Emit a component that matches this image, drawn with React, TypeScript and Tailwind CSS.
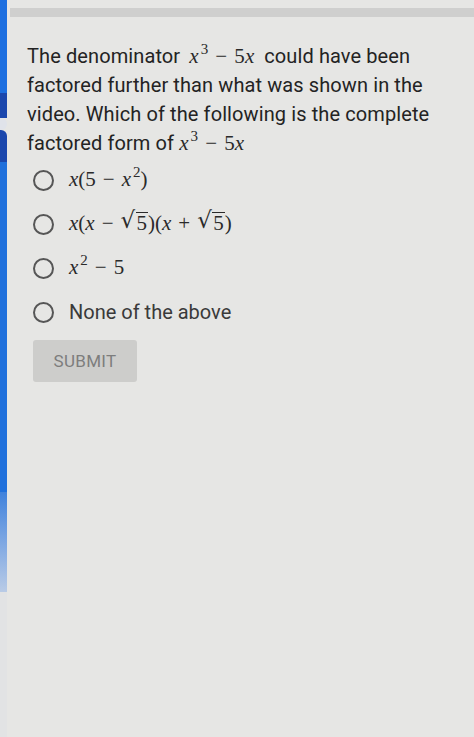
import React from "react";

const M: React.FC<{ children: React.ReactNode }> = ({ children }) => (
  <span className="font-['Liberation_Serif',serif] text-[21px] text-[#2a2a2a]">{children}</span>
);
const I: React.FC<{ children: React.ReactNode }> = ({ children }) => <i>{children}</i>;
const Sup: React.FC<{ children: React.ReactNode }> = ({ children }) => (
  <sup className="text-[15px] top-[-0.6em] ml-[2px]">{children}</sup>
);
const Sqrt: React.FC<{ children: React.ReactNode }> = ({ children }) => (
  <span className="inline-block relative pl-[15px]">
    <span className="absolute left-0 top-[-2px] font-['DejaVu_Serif',serif] text-[23px] leading-[28px]">√</span>
    <span className="inline-block border-t-[1.5px] border-[#2a2a2a] leading-[21px] pl-[1px] pr-[1px]">{children}</span>
  </span>
);

const Radio: React.FC = () => (
  <span className="w-[21px] h-[21px] rounded-full border-[2px] border-[#565656] shrink-0" />
);

export default function App() {
  return (
    <div className="w-[474px] h-[737px] flex bg-[#e6e6e4] overflow-hidden font-['Roboto',sans-serif]">
      <div className="w-[7px] flex flex-col shrink-0">
        <div className="h-[93px] bg-[#1d6fe0]" />
        <div className="h-[25px] bg-[#1b47ad]" />
        <div className="h-[12px] bg-[#e0e3ea] rounded-r-[8px]" />
        <div className="h-[32px] bg-[#1b47ad] rounded-tr-[6px]" />
        <div className="h-[330px] bg-[#1f70dc]" />
        <div className="h-[100px] bg-gradient-to-b from-[#3f82dc] to-[#b9cbe6]" />
        <div className="flex-1 bg-[#e2e3e4]" />
      </div>
      <div className="flex-1 flex flex-col">
        <div className="h-[8px]" />
        <div className="h-[9px] bg-[#cfcfce] ml-[3px]" />
        <div className="pl-[20px] pt-[25px] pr-[8px]">
          <p className="text-[20px] leading-[29px] text-[#232323] tracking-[0.1px]">
            The denominator{" "}
            <M>
              <span className="ml-[4px]">
                <I>x</I>
                <Sup>3</Sup>
                <span className="mx-[7px]">−</span>5<I>x</I>
              </span>
            </M>
            <span className="ml-[10px]">could have been</span> factored further than what was shown in the video. Which of the following is the complete factored form of{" "}
            <M>
              <I>x</I>
              <Sup>3</Sup>
              <span className="mx-[7px]">−</span>5<I>x</I>
            </M>
          </p>
          <div className="flex flex-col pl-[6px]">
            <div className="h-[44px] flex items-center gap-[15px]">
              <Radio />
              <M>
                <I>x</I>(5<span className="mx-[7px]">−</span>
                <I>x</I>
                <Sup>2</Sup>)
              </M>
            </div>
            <div className="h-[44px] flex items-center gap-[15px]">
              <Radio />
              <M>
                <I>x</I>(<I>x</I>
                <span className="mx-[7px]">−</span>
                <Sqrt>5</Sqrt>)(<I>x</I>
                <span className="mx-[7px]">+</span>
                <Sqrt>5</Sqrt>)
              </M>
            </div>
            <div className="h-[44px] flex items-center gap-[15px]">
              <Radio />
              <M>
                <I>x</I>
                <Sup>2</Sup>
                <span className="mx-[7px]">−</span>5
              </M>
            </div>
            <div className="h-[44px] flex items-center gap-[15px]">
              <Radio />
              <span className="text-[20px] text-[#3a3a3a]">None of the above</span>
            </div>
          </div>
          <div className="mt-[6px] ml-[6px] w-[104px] h-[42px] rounded-[3px] bg-[#cdcdcb] flex items-center justify-center">
            <span className="text-[17px] text-[#7d7d7d] tracking-[0.3px] relative top-[1px]">SUBMIT</span>
          </div>
        </div>
      </div>
    </div>
  );
}
